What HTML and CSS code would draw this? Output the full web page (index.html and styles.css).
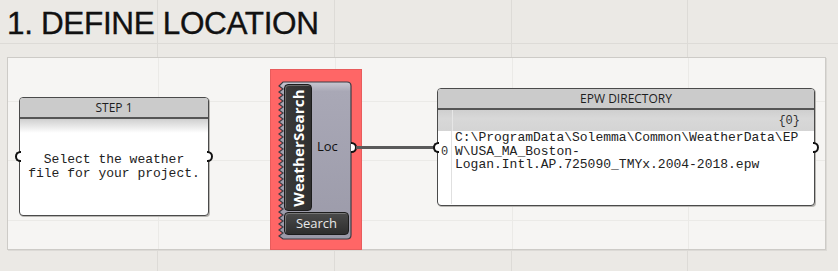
FILE: index.html
```html
<!DOCTYPE html>
<html>
<head>
<meta charset="utf-8">
<link rel="stylesheet" href="styles.css">
</head>
<body>
<h1 class="title">1. DEFINE LOCATION</h1>
<div class="group">
  <div class="node panel step">
    <div class="panel-head">STEP 1</div>
    <div class="panel-shade"></div>
    <div class="step-body">Select the weather<br>file for your project.</div>
    <span class="port port-in"></span>
    <span class="port port-out"></span>
  </div>

  <div class="node redbox"></div>
  <div class="node comp">
    <svg class="comp-shape" width="75" height="159" viewBox="0 0 75 159">
      <defs>
        <linearGradient id="cg" x1="0" y1="0" x2="0" y2="1">
          <stop offset="0" stop-color="#c9c8d2"/>
          <stop offset="0.06" stop-color="#a9a8b6"/>
          <stop offset="1" stop-color="#9b9aa9"/>
        </linearGradient>
      </defs>
      <path d="M6 1 H70 Q74 1 74 5 V154 Q74 158 70 158 H6 L2 155 L6 152 L2 149 L6 146 L2 143 L6 140 L2 137 L6 134 L2 131 L6 128 L2 125 L6 122 L2 119 L6 116 L2 113 L6 110 L2 107 L6 104 L2 101 L6 98 L2 95 L6 92 L2 89 L6 86 L2 83 L6 80 L2 77 L6 74 L2 71 L6 68 L2 65 L6 62 L2 59 L6 56 L2 53 L6 50 L2 47 L6 44 L2 41 L6 38 L2 35 L6 32 L2 29 L6 26 L2 23 L6 20 L2 17 L6 14 L2 11 L6 8 L2 5 Z" fill="url(#cg)" stroke="#3c3c44" stroke-width="1.2"/>
    </svg>
    <div class="comp-label"><span>WeatherSearch</span></div>
    <div class="comp-out">Loc</div>
    <div class="comp-btn">Search</div>
    <span class="port port-comp"></span>
  </div>

  <div class="node wire"></div>

  <div class="node panel epw">
    <div class="panel-head">EPW DIRECTORY</div>
    <div class="epw-band"><span>{0}</span></div>
    <div class="epw-body">
      <div class="epw-idx">0</div>
      <div class="epw-text">C:\ProgramData\Solemma\Common\WeatherData\EP<br>W\USA_MA_Boston-<br>Logan.Intl.AP.725090_TMYx.2004-2018.epw</div>
    </div>
    <span class="port port-in"></span>
    <span class="port port-out"></span>
  </div>
</div>
</body>
</html>
```
FILE: styles.css
```css
html, body {
  margin: 0;
  padding: 0;
}
body {
  width: 838px;
  height: 271px;
  overflow: hidden;
  background-color: #ebe9e5;
  background-image:
    linear-gradient(to right, transparent 157px, #dddbd7 157px, #dddbd7 158px, transparent 158px,
      transparent 334px, #dddbd7 334px, #dddbd7 335px, transparent 335px,
      transparent 511px, #dddbd7 511px, #dddbd7 512px, transparent 512px,
      transparent 687px, #dddbd7 687px, #dddbd7 688px, transparent 688px),
    linear-gradient(to bottom, transparent 43px, #dddbd7 43px, #dddbd7 44px, transparent 44px);
  font-family: "Liberation Sans", Arial, sans-serif;
}
.title {
  margin: 0;
  height: 57px;
  box-sizing: border-box;
  padding: 5px 0 0 7px;
  font-family: "Liberation Sans", Arial, sans-serif;
  font-weight: normal;
  font-size: 31.5px;
  line-height: 36px;
  color: #111;
  letter-spacing: -0.35px;
  -webkit-text-stroke: 0.35px #111;
}
.group {
  position: relative;
  margin-left: 7px;
  width: 817px;
  height: 191px;
  border: 1px solid #cdcbc7;
  background-color: #f6f5f3;
  background-image:
    linear-gradient(to right, transparent 150px, #ebeae7 150px, #ebeae7 151px, transparent 151px,
      transparent 327px, #ebeae7 327px, #ebeae7 328px, transparent 328px,
      transparent 504px, #ebeae7 504px, #ebeae7 505px, transparent 505px,
      transparent 680px, #ebeae7 680px, #ebeae7 681px, transparent 681px),
    linear-gradient(to bottom, transparent 43px, #ebeae7 43px, #ebeae7 44px, transparent 44px,
      transparent 102px, #ebeae7 102px, #ebeae7 103px, transparent 103px,
      transparent 162px, #ebeae7 162px, #ebeae7 163px, transparent 163px);
  box-shadow: 1px 1px 0 #dcdad6;
}
.node {
  position: absolute;
}
.panel {
  box-sizing: border-box;
  border: 1px solid #4a4a4a;
  border-radius: 4px;
  background: #fff;
  box-shadow: 1px 1px 0 #b9b7b3;
}
.panel-head {
  height: 19px;
  background: #cbcbcb;
  border-bottom: 2px solid #555;
  border-radius: 3px 3px 0 0;
  text-align: center;
  font-family: "Open Sans", "Noto Sans", sans-serif;
  font-size: 12px;
  line-height: 19px;
  color: #1e1e1e;
}
.panel-shade {
  height: 14px;
  background: linear-gradient(to bottom, #cfcfcf, #ffffff);
}
.step {
  left: 11px;
  top: 39px;
  width: 190px;
  height: 119px;
}
.step-body {
  text-align: center;
  font-family: "Liberation Mono", "Courier New", monospace;
  font-size: 13px;
  line-height: 14px;
  color: #222;
  margin-top: 20px;
  white-space: nowrap;
}
.port {
  position: absolute;
  width: 6px;
  height: 11px;
  border: 2.5px solid #111;
  background: #fff;
  box-sizing: border-box;
}
.port-in {
  left: -5px;
  border-radius: 7px 0 0 7px;
  border-right: none;
}
.port-out {
  right: -5px;
  border-radius: 0 7px 7px 0;
  border-left: none;
}
.step .port {
  top: 53px;
}
.redbox {
  left: 262px;
  top: 11px;
  width: 92px;
  height: 181px;
  box-sizing: border-box;
  background: #ff6666;
  border: 1px solid #e85c5c;
}
.comp {
  left: 269px;
  top: 23px;
  width: 75px;
  height: 159px;
}
.comp-shape {
  position: absolute;
  left: 0;
  top: 0;
}
.comp-label {
  position: absolute;
  left: 7px;
  top: 3px;
  width: 28px;
  height: 127px;
  box-sizing: border-box;
  background: linear-gradient(to right, #3a3a3a, #2f2f2f);
  border: 1px solid #1c1c1c;
  border-radius: 4px;
  box-shadow: inset 1px 1px 0 #6a6a6a;
  display: flex;
  align-items: center;
  justify-content: center;
  overflow: hidden;
}
.comp-label span {
  display: block;
  transform: rotate(-90deg);
  white-space: nowrap;
  color: #fff;
  font-family: "Open Sans", "Noto Sans", sans-serif;
  font-weight: bold;
  font-size: 15px;
  letter-spacing: 0.2px;
}
.comp-out {
  position: absolute;
  left: 40px;
  top: 56px;
  font-family: "Open Sans", "Noto Sans", sans-serif;
  font-size: 13px;
  color: #111;
}
.comp-btn {
  position: absolute;
  left: 7px;
  top: 131px;
  width: 65px;
  height: 23px;
  box-sizing: border-box;
  background: linear-gradient(to bottom, #4a4a4a, #2e2e2e);
  border: 1px solid #1c1c1c;
  border-radius: 4px;
  box-shadow: inset 1px 1px 0 #777;
  color: #e8e8e8;
  font-family: "Open Sans", "Noto Sans", sans-serif;
  font-size: 13px;
  line-height: 20px;
  text-align: center;
}
.port-comp {
  right: -5px;
  top: 61px;
  border-radius: 0 7px 7px 0;
  border-left: none;
}
.wire {
  left: 348px;
  top: 88px;
  width: 82px;
  height: 3px;
  background: #5a5a5a;
}
.epw {
  left: 429px;
  top: 30px;
  width: 378px;
  height: 118px;
}
.epw-band {
  height: 21px;
  background: linear-gradient(to bottom, #cfcfcf 0, #d8d8d8 40%, #d4d4d4 100%);
  text-align: right;
  position: relative;
}
.epw-band::before {
  content: "";
  position: absolute;
  left: 14px;
  top: 0;
  bottom: 0;
  width: 1px;
  background: #e6e6e6;
}
.epw-band span {
  display: inline-block;
  padding-right: 14px;
  padding-top: 2px;
  font-family: "Liberation Mono", "Courier New", monospace;
  font-size: 12px;
  color: #333;
}
.epw-body {
  display: flex;
  height: 73px;
}
.epw-idx {
  width: 14px;
  flex: none;
  box-sizing: border-box;
  border-right: 1px solid #e0e0e0;
  padding-top: 14px;
  text-align: center;
  font-family: "Liberation Mono", "Courier New", monospace;
  font-size: 12px;
  color: #333;
}
.epw-text {
  padding: 0 0 0 3px;
  font-family: "Liberation Mono", "Courier New", monospace;
  font-size: 13px;
  line-height: 13.5px;
  color: #222;
  white-space: nowrap;
}
.epw .port {
  top: 53px;
}
```
